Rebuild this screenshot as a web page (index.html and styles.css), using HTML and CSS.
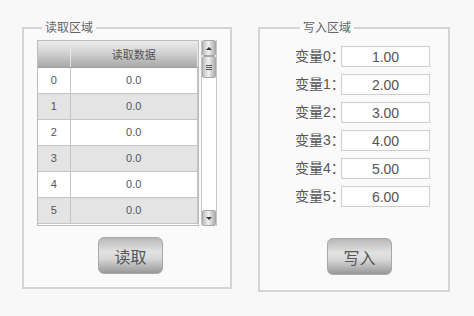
FILE: index.html
```html
<!DOCTYPE html>
<html lang="zh-CN">
<head>
    <meta charset="UTF-8">
    <title>读写区域</title>
    <link rel="stylesheet" href="styles.css">
</head>
<body>
    <div class="page">
        <fieldset class="group group-read">
            <legend>读取区域</legend>
            <div class="grid-box">
                <div class="grid-wrap">
                    <table class="grid">
                        <thead>
                            <tr><th class="col-idx"></th><th>读取数据</th></tr>
                        </thead>
                        <tbody>
                            <tr><td class="col-idx">0</td><td>0.0</td></tr>
                            <tr class="alt"><td class="col-idx">1</td><td>0.0</td></tr>
                            <tr><td class="col-idx">2</td><td>0.0</td></tr>
                            <tr class="alt"><td class="col-idx">3</td><td>0.0</td></tr>
                            <tr><td class="col-idx">4</td><td>0.0</td></tr>
                            <tr class="alt"><td class="col-idx">5</td><td>0.0</td></tr>
                        </tbody>
                    </table>
                </div>
                <div class="scrollbar">
                    <div class="sb-btn"><span class="arrow up"></span></div>
                    <div class="sb-thumb"><span class="grip"></span></div>
                    <div class="sb-track"></div>
                    <div class="sb-btn"><span class="arrow down"></span></div>
                </div>
            </div>
            <button class="btn btn-read">读取</button>
        </fieldset>

        <fieldset class="group group-write">
            <legend>写入区域</legend>
            <div class="form">
                <div class="row"><label>变量0：</label><input type="text" value="1.00"></div>
                <div class="row"><label>变量1：</label><input type="text" value="2.00"></div>
                <div class="row"><label>变量2：</label><input type="text" value="3.00"></div>
                <div class="row"><label>变量3：</label><input type="text" value="4.00"></div>
                <div class="row"><label>变量4：</label><input type="text" value="5.00"></div>
                <div class="row"><label>变量5：</label><input type="text" value="6.00"></div>
            </div>
            <button class="btn btn-write">写入</button>
        </fieldset>
    </div>
</body>
</html>
```

FILE: styles.css
```css
* {
    margin: 0;
    padding: 0;
    box-sizing: border-box;
    font-family: "Liberation Sans", "Noto Sans CJK SC", sans-serif;
}

body {
    background-color: #f8f8f8;
    color: #555;
}

.page {
    display: flex;
    align-items: flex-start;
    gap: 26px;
    padding: 20px 0 0 22px;
}

.group {
    border: 2px solid #d4d4d4;
    background-color: #fafafa;
}

.group legend {
    margin-left: 5px;
    padding: 0 3px;
    font-size: 12px;
    line-height: 16px;
    color: #666;
}

.group-read {
    width: 210px;
    height: 269px;
    padding: 4px 0 0 13px;
}

.group-write {
    width: 192px;
    height: 272px;
    padding: 10px 0 0 35px;
}

/* table + scrollbar */
.grid-box {
    display: flex;
    height: 186px;
}

.grid-wrap {
    width: 162px;
    height: 186px;
    overflow: hidden;
    border: 1px solid #bdbdbd;
    background-color: #fff;
}

.grid {
    width: 100%;
    border-collapse: collapse;
    table-layout: fixed;
}

.grid th,
.grid td {
    height: 26px;
    text-align: center;
    font-size: 11px;
    font-weight: normal;
    color: #555;
    border-right: 1px solid #c4c4c4;
    border-bottom: 1px solid #c4c4c4;
}

.grid th {
    background: linear-gradient(#ececec, #d2d2d2 45%, #a8a8a8);
    border-bottom-color: #a0a0a0;
    border-right-color: #e6e6e6;
}

.grid .col-idx {
    width: 32px;
}

.grid tr.alt td {
    background-color: #e4e4e4;
}

.scrollbar {
    width: 16px;
    height: 186px;
    margin-left: 2px;
    display: flex;
    flex-direction: column;
    border-left: 1px solid #c8c8c8;
    border-right: 1px solid #c8c8c8;
    background-color: #fff;
}

.sb-btn,
.sb-thumb {
    display: flex;
    align-items: center;
    justify-content: center;
    background: linear-gradient(90deg, #c0c0c0, #f0f0f0 45%, #b0b0b0);
    border: 1px solid #a8a8a8;
    border-radius: 2px;
}

.sb-btn {
    height: 16px;
}

.sb-thumb {
    height: 22px;
}

.sb-track {
    flex: 1;
}

.arrow {
    width: 0;
    height: 0;
    border-left: 3px solid transparent;
    border-right: 3px solid transparent;
}

.arrow.up {
    border-bottom: 3px solid #333;
}

.arrow.down {
    border-top: 3px solid #333;
}

.grip {
    width: 6px;
    height: 5px;
    border-top: 1px solid #555;
    border-bottom: 1px solid #555;
    position: relative;
}

.grip::after {
    content: "";
    position: absolute;
    left: 0;
    right: 0;
    top: 1px;
    border-top: 1px solid #555;
}

/* write form */
.form {
    display: flex;
    flex-direction: column;
    gap: 7px;
}

.row {
    display: flex;
    align-items: center;
    height: 21px;
}

.row label {
    width: 46px;
    font-size: 14px;
    line-height: 21px;
    color: #555;
    white-space: nowrap;
}

.row input {
    width: 89px;
    height: 21px;
    border: 1px solid #cfcfcf;
    background-color: #fefefe;
    text-align: center;
    font-size: 14px;
    color: #555;
}

/* buttons */
.btn {
    display: block;
    width: 65px;
    height: 37px;
    border: 1px solid #a8a8a8;
    border-radius: 6px;
    background: linear-gradient(#b8b8b8, #e2e2e2 40%, #d6d6d6 60%, #989898);
    font-size: 16px;
    color: #555;
    cursor: pointer;
}

.btn-read {
    margin: 11px 0 0 61px;
}

.btn-write {
    margin: 31px 0 0 32px;
}
```
